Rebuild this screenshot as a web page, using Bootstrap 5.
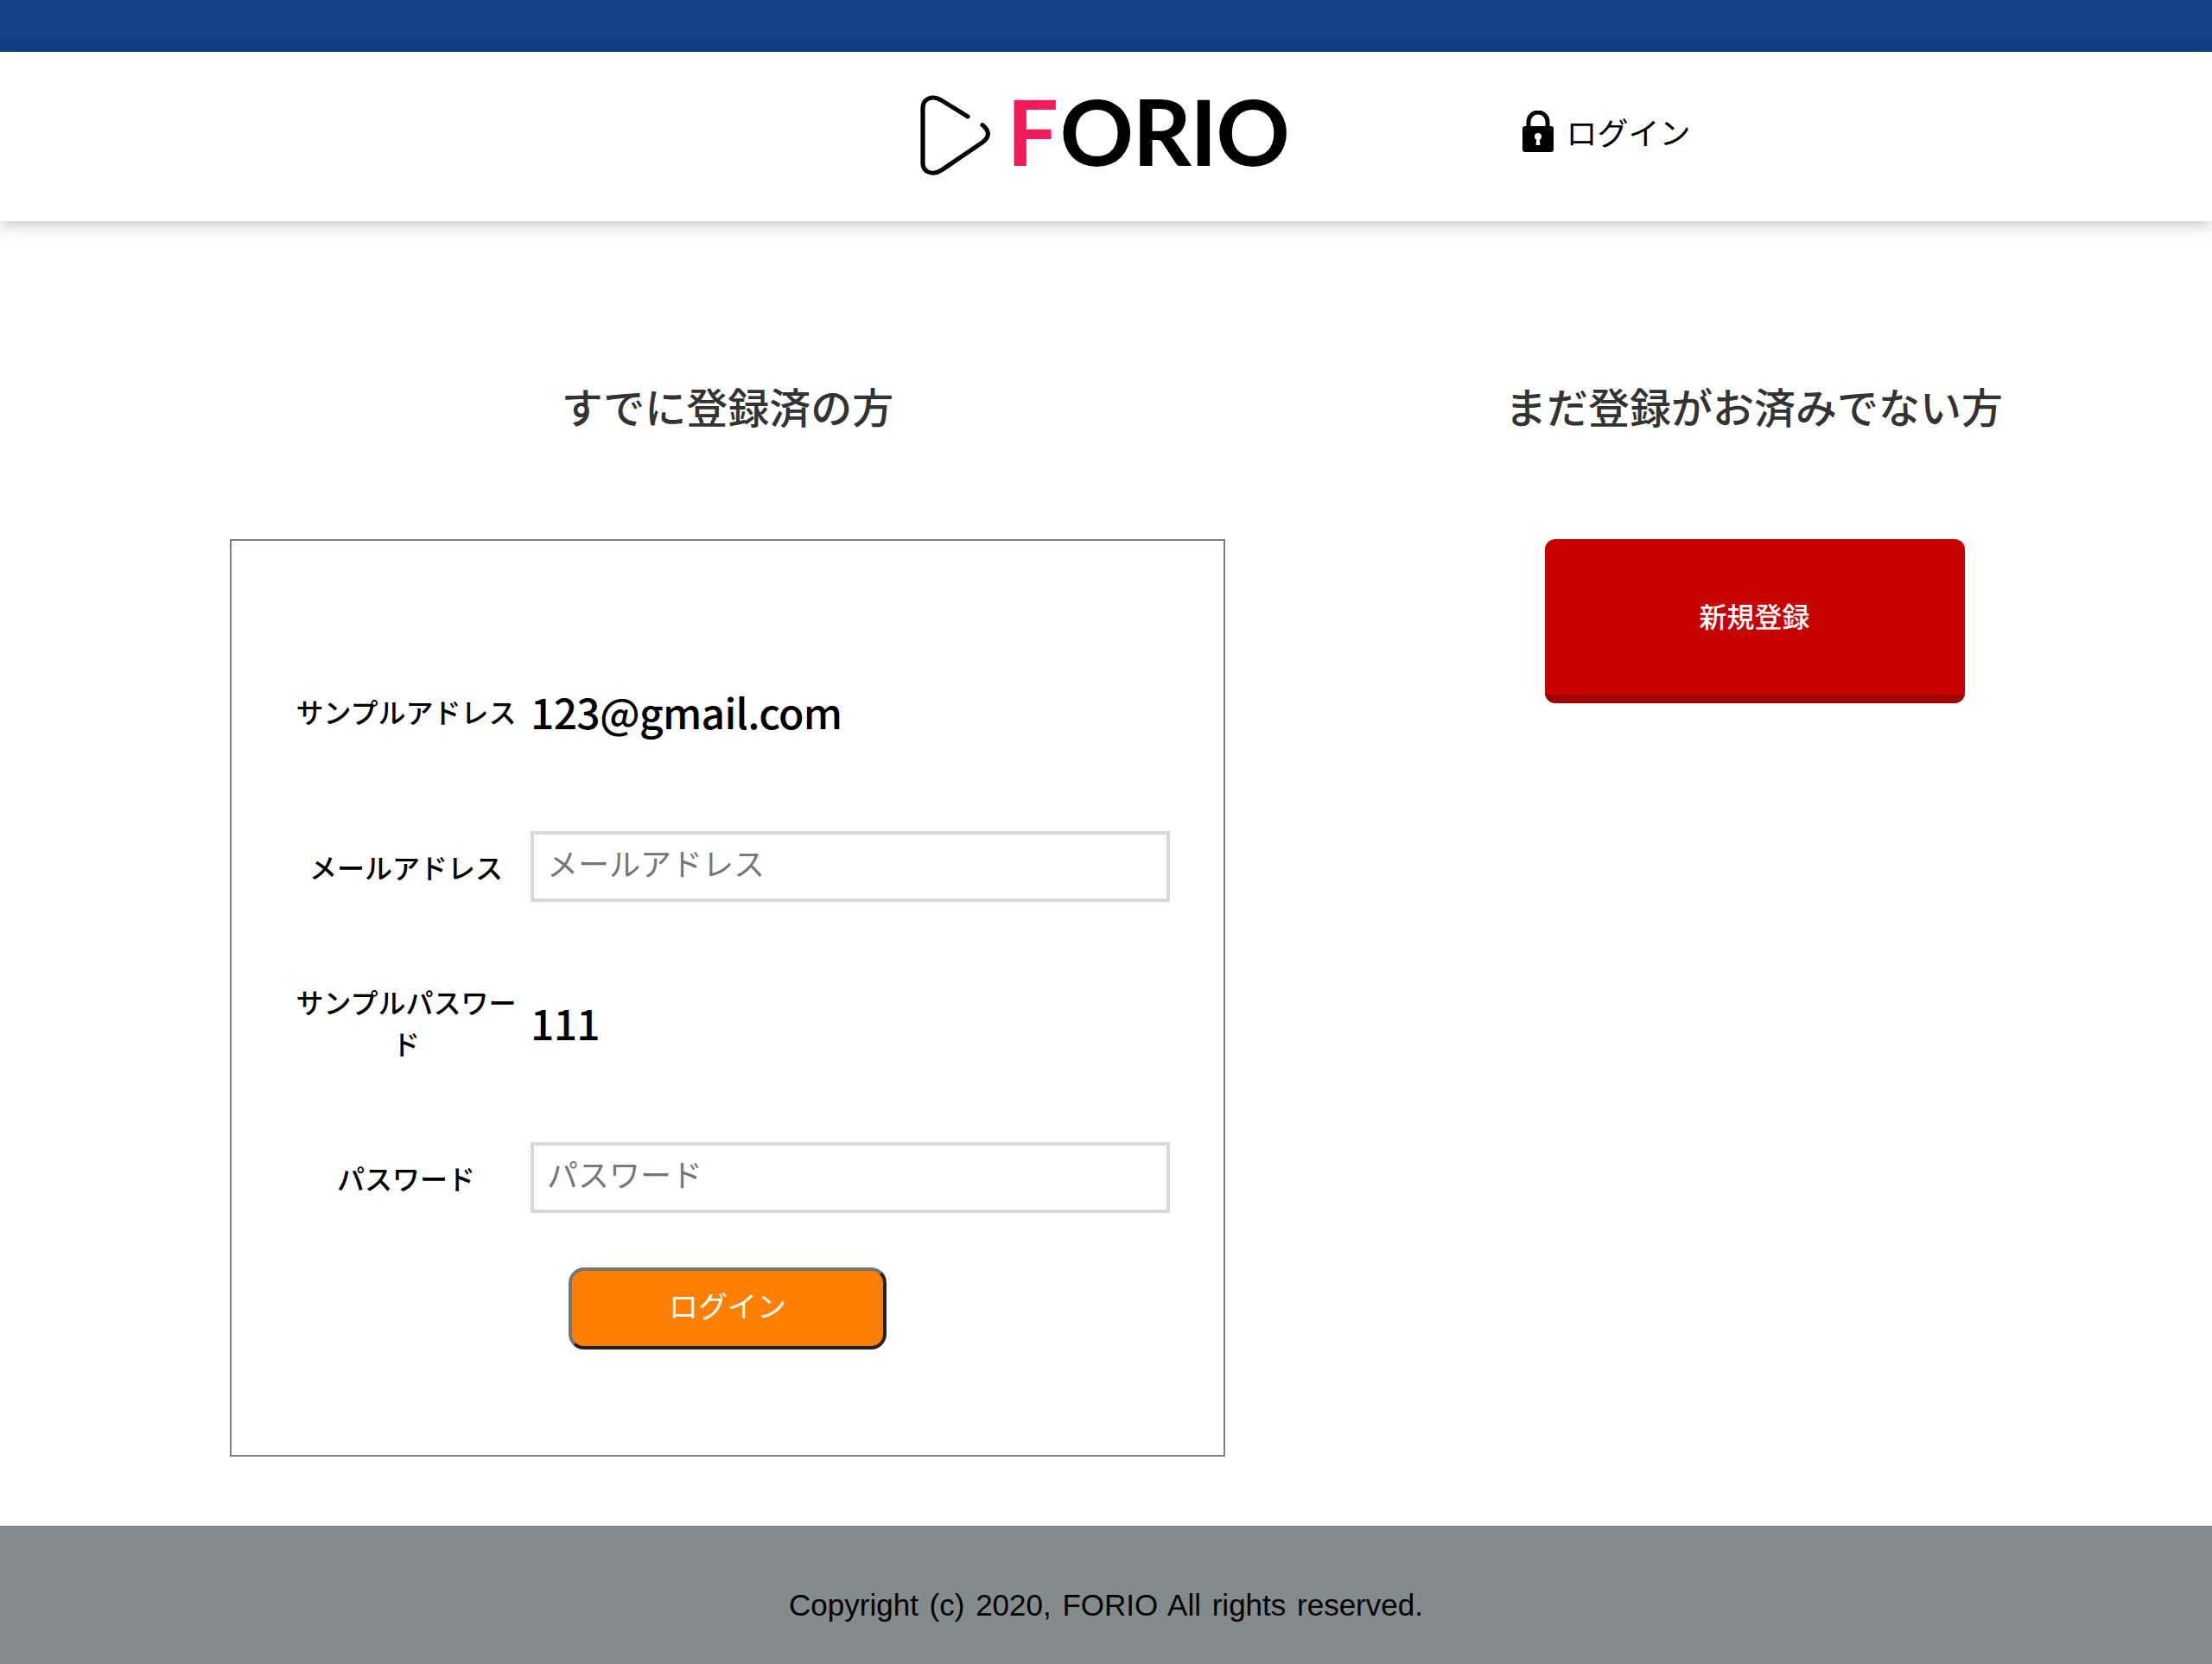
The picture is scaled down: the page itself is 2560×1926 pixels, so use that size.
<!DOCTYPE html>
<html lang="ja">
<head>
<meta charset="utf-8">
<title>FORIO ログイン</title>
<link href="https://cdn.jsdelivr.net/npm/bootstrap@5.3.0/dist/css/bootstrap.min.css" rel="stylesheet">
<style>
body{font-family:"Noto Sans CJK JP","Liberation Sans",sans-serif;color:#000;background:#fff;margin:0}
.top-strip{height:60px;background:#134086}
.site-head{height:196px;padding-left:1065px;box-shadow:0 3px 18px rgba(0,0,0,.25)}
.logo-word{font-family:Lato,sans-serif;font-weight:700;font-size:106px;line-height:1;margin-left:16px;letter-spacing:-1.5px;margin-top:-14px}
.logo-f{color:#f31c5a;margin-right:3px}
.login-link{margin-left:271px;margin-top:-12px;font-size:36px;color:#000;text-decoration:none;line-height:1}
.login-link svg{margin-right:14px}
.left-pane{width:1684px}
.right-pane{width:692px}
.pane-title{font-size:48px;font-weight:500;color:#333;height:368px;padding-top:177px;line-height:72px;margin:0;text-align:center}
.login-box{width:1152px;height:1062px;margin:0 auto 80px;border:2px solid #808080;padding:107px 62px 0 73px}
.form-line{display:flex;align-items:center;height:180px}
.field-label{width:258px;flex:none;font-size:32px;font-weight:500;line-height:48px;text-align:center;margin:0}
.field-value{margin-left:15px;font-size:48px;font-weight:500;line-height:1.5;letter-spacing:-.7px}
.field-input{margin-left:15px;width:742px;height:82px;border:4px solid #d8d9de;border-radius:0;font-size:36px;padding:0 15px 10px;background:#fff;outline:0}
.field-input::placeholder{color:#757575}
.submit-btn{display:block;width:368px;height:95px;margin:14px 0 0 317px;background:#ff8000;color:#fff;font-size:34px;border:4px solid;border-color:#767676 #222 #222 #767676;border-radius:18px;padding:0 0 8px}
.signup-btn{width:486px;height:190px;margin-left:1px;background:#c70000;color:#fff;font-size:32px;font-weight:500;border:0;border-bottom:10px solid #a00000;border-radius:12px;padding:0 0 4px}
.site-foot{height:160px;background:#848b8c;font-size:35px;color:#000;font-family:"Liberation Sans",sans-serif;word-spacing:3px;padding-top:65px;line-height:54px}
</style>
</head>
<body>
<div class="top-strip"></div>
<header class="site-head d-flex align-items-center position-relative bg-white">
  <svg class="mt-n1" width="84" height="96" viewBox="0 0 84 100" preserveAspectRatio="none" fill="none" stroke="#000" stroke-width="5.2" stroke-linecap="round" aria-hidden="true"><path d="M55 26 L24 6 C14 0 3 4 3 16 L3 82 C3 94 16 97 24 91 L72 57 C81 50 80 43 72 36"/></svg>
  <div class="logo-word"><span class="logo-f">F</span>ORIO</div>
  <a class="login-link d-flex align-items-center" href="#">
    <svg width="36" height="48" viewBox="0 0 36 48" aria-hidden="true"><path d="M7 20V13a11 11 0 0 1 22 0v7" fill="none" stroke="#000" stroke-width="5"/><rect x="0" y="18" width="36" height="30" rx="3" fill="#000"/><circle cx="18" cy="30" r="4" fill="#fff"/><path d="M16.5 31h3l1 9h-5z" fill="#fff"/></svg>
    <span>ログイン</span>
  </a>
</header>
<main class="d-flex">
  <section class="left-pane">
    <h2 class="pane-title">すでに登録済の方</h2>
    <form class="login-box">
      <div class="form-line"><p class="field-label">サンプルアドレス</p><div class="field-value">123@gmail.com</div></div>
      <div class="form-line"><label class="field-label">メールアドレス</label><input class="field-input" type="email" placeholder="メールアドレス"></div>
      <div class="form-line"><p class="field-label">サンプルパスワード</p><div class="field-value">111</div></div>
      <div class="form-line"><label class="field-label">パスワード</label><input class="field-input" type="password" placeholder="パスワード"></div>
      <button class="submit-btn" type="button">ログイン</button>
    </form>
  </section>
  <section class="right-pane">
    <h2 class="pane-title">まだ登録がお済みでない方</h2>
    <div class="text-center"><button class="signup-btn" type="button">新規登録</button></div>
  </section>
</main>
<footer class="site-foot text-center">Copyright (c) 2020, FORIO All rights reserved.</footer>
</body>
</html>
